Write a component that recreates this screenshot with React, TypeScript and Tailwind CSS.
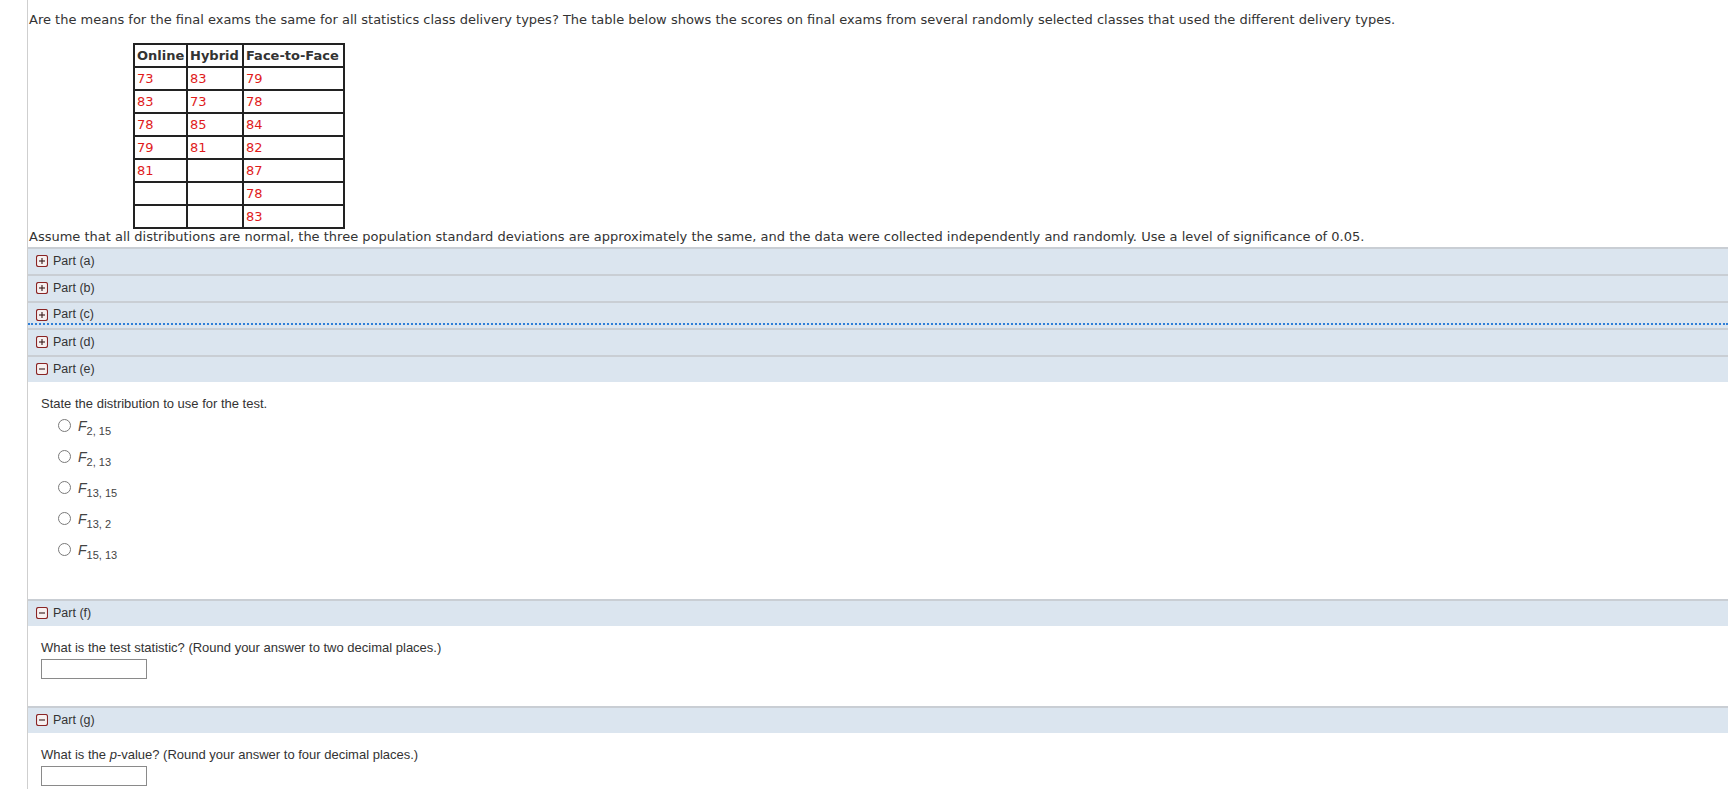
import React from "react";

const verdana = { fontFamily: '"DejaVu Sans", Verdana, sans-serif' };
const arial = { fontFamily: '"Liberation Sans", Arial, sans-serif' };

function Icon({ open }: { open: boolean }) {
  return (
    <svg width="12" height="12" viewBox="0 0 12 12" className="shrink-0">
      <rect x="0.5" y="0.5" width="11" height="11" rx="2" fill="#f6f0f0" stroke="#8a2424" strokeWidth="1.1" />
      <line x1="3" y1="6" x2="9" y2="6" stroke="#3a1a1a" strokeWidth="1.1" />
      {!open && <line x1="6" y1="3" x2="6" y2="9" stroke="#3a1a1a" strokeWidth="1.1" />}
    </svg>
  );
}

function Header({ label, open, dotted }: { label: string; open?: boolean; dotted?: boolean }) {
  return (
    <div className="h-[27px] border-t-2 border-[#c9ced4] bg-[#dbe5ef] text-[12.5px] text-[#333]" style={arial}>
      {dotted ? (
        <div className="h-[22px] pt-[3px] flex items-center gap-[5px] pl-[8px] border-b-2 border-dotted border-[#2f7fd8]">
          <Icon open={!!open} />
          <span>{label}</span>
        </div>
      ) : (
        <div className="h-full flex items-center gap-[5px] pl-[8px] pb-[1px]">
          <Icon open={!!open} />
          <span>{label}</span>
        </div>
      )}
    </div>
  );
}

function Radio({ sub }: { sub: string }) {
  return (
    <div className="h-[31px] flex items-center pl-[30px]">
      <span className="w-[13px] h-[13px] rounded-full border border-[#7a7a7a] bg-white shrink-0" />
      <span className="ml-[7px] text-[14px] text-[#444] leading-[16px]">
        <i>F</i>
        <sub className="text-[11px] relative top-[4px] align-baseline">{sub}</sub>
      </span>
    </div>
  );
}

const rows: [string, string, string][] = [
  ["73", "83", "79"],
  ["83", "73", "78"],
  ["78", "85", "84"],
  ["79", "81", "82"],
  ["81", "", "87"],
  ["", "", "78"],
  ["", "", "83"],
];

export default function App() {
  return (
    <div className="min-h-[789px] bg-white pl-[27px]">
      <div className="min-h-[789px] border-l border-[#cfcfcf]">
        <div className="text-[13px] text-[#333] leading-[16px] pl-[1px]" style={verdana}>
          <p className="pt-[12px]">
            Are the means for the final exams the same for all statistics class delivery types? The table below shows the scores on final exams from several randomly selected classes that used the different delivery types.
          </p>
          <div className="pl-[104px] mt-[15px]">
            <table className="table-fixed border-separate border-spacing-0 border border-[#222] w-[212px]">
              <colgroup>
                <col className="w-[53px]" />
                <col className="w-[56px]" />
                <col className="w-[101px]" />
              </colgroup>
              <thead>
                <tr>
                  {["Online", "Hybrid", "Face-to-Face"].map((h) => (
                    <th key={h} className="border border-[#222] text-left font-bold text-[#333] leading-[21px] pl-[2px] pr-0 py-0 whitespace-nowrap">
                      {h}
                    </th>
                  ))}
                </tr>
              </thead>
              <tbody>
                {rows.map((r, i) => (
                  <tr key={i}>
                    {r.map((c, j) => (
                      <td key={j} className="border border-[#222] text-left text-[#e01b1b] leading-[21px] pl-[2px] py-0">
                        {c}
                      </td>
                    ))}
                  </tr>
                ))}
              </tbody>
            </table>
          </div>
          <p>
            Assume that all distributions are normal, the three population standard deviations are approximately the same, and the data were collected independently and randomly. Use a level of significance of 0.05.
          </p>
        </div>

        <div className="mt-[2px]">
          <Header label="Part (a)" />
          <Header label="Part (b)" />
          <Header label="Part (c)" dotted />
          <Header label="Part (d)" />
          <Header label="Part (e)" open />
        </div>

        <div className="text-[13px] text-[#333]" style={arial}>
          <div className="pl-[13px] pt-[14px] leading-[16px]">State the distribution to use for the test.</div>
          <div className="mt-[-2px]">
            <Radio sub="2, 15" />
            <Radio sub="2, 13" />
            <Radio sub="13, 15" />
            <Radio sub="13, 2" />
            <Radio sub="15, 13" />
          </div>
        </div>

        <div className="mt-[34px]">
          <Header label="Part (f)" open />
        </div>
        <div className="text-[13px] text-[#333] pl-[13px]" style={arial}>
          <div className="pt-[14px] leading-[16px]">What is the test statistic? (Round your answer to two decimal places.)</div>
          <div className="mt-[3px] w-[106px] h-[20px] border border-[#8a8a8a] bg-white" />
        </div>

        <div className="mt-[27px]">
          <Header label="Part (g)" open />
        </div>
        <div className="text-[13px] text-[#333] pl-[13px]" style={arial}>
          <div className="pt-[14px] leading-[16px]">
            What is the <i>p</i>-value? (Round your answer to four decimal places.)
          </div>
          <div className="mt-[3px] w-[106px] h-[20px] border border-[#8a8a8a] bg-white" />
        </div>
      </div>
    </div>
  );
}
